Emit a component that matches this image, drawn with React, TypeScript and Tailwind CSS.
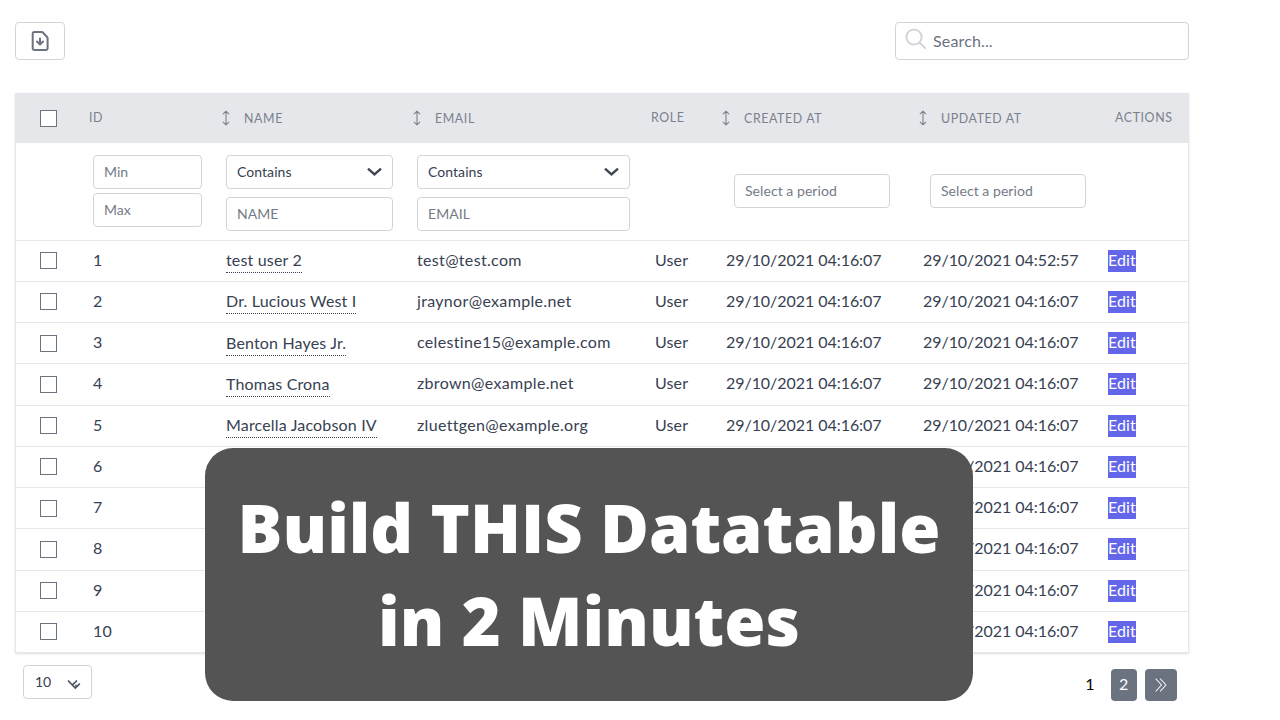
import { type ReactNode } from "react";
import clsx from "clsx";

interface UserRow {
  id: number;
  name: string;
  email: string;
  role: string;
  createdAt: string;
  updatedAt: string;
}

const STAMP = "29/10/2021 04:16:07";

const rows: UserRow[] = [
  { id: 1, name: "test user 2", email: "test@test.com", role: "User", createdAt: STAMP, updatedAt: "29/10/2021 04:52:57" },
  { id: 2, name: "Dr. Lucious West I", email: "jraynor@example.net", role: "User", createdAt: STAMP, updatedAt: STAMP },
  { id: 3, name: "Benton Hayes Jr.", email: "celestine15@example.com", role: "User", createdAt: STAMP, updatedAt: STAMP },
  { id: 4, name: "Thomas Crona", email: "zbrown@example.net", role: "User", createdAt: STAMP, updatedAt: STAMP },
  { id: 5, name: "Marcella Jacobson IV", email: "zluettgen@example.org", role: "User", createdAt: STAMP, updatedAt: STAMP },
  { id: 6, name: "", email: "", role: "", createdAt: "", updatedAt: STAMP },
  { id: 7, name: "", email: "", role: "", createdAt: "", updatedAt: STAMP },
  { id: 8, name: "", email: "", role: "", createdAt: "", updatedAt: STAMP },
  { id: 9, name: "", email: "", role: "", createdAt: "", updatedAt: STAMP },
  { id: 10, name: "", email: "", role: "", createdAt: "", updatedAt: STAMP },
];

const GRID = "grid grid-cols-[77px_133px_191px_238px_71px_197px_185px_81px]";

function Checkbox() {
  return <span className="ml-6 block size-[17px] border border-[#6b7280] bg-white" />;
}

function SortIcon() {
  return (
    <svg width="10" height="16" viewBox="0 0 10 16" fill="none" stroke="#7b818c" strokeWidth="1.1" strokeLinecap="round" strokeLinejoin="round">
      <path d="M5 1.5v13M2.2 3.8 5 1.2l2.8 2.6M2.2 12.2 5 14.8l2.8-2.6" />
    </svg>
  );
}

function ChevronIcon() {
  return (
    <svg width="15" height="10" viewBox="0 0 15 10" fill="none" stroke="#3f4754" strokeWidth="2.4">
      <path d="M1 1.6 7.5 7.4 14 1.6" />
    </svg>
  );
}

function HeaderCell({ label, sortable = false }: { label: string; sortable?: boolean }) {
  if (!sortable) {
    return <div className="text-[12.4px] tracking-[0.6px]">{label}</div>;
  }
  return (
    <div className="-ml-[5px] flex items-center gap-[13px] text-[12.4px] tracking-[0.6px]">
      <SortIcon />
      <span className="pt-0.5">{label}</span>
    </div>
  );
}

function Field({ children, className, filled = false }: { children: ReactNode; className?: string; filled?: boolean }) {
  return (
    <div
      className={clsx(
        "flex h-[34px] items-center justify-between rounded border border-[#d1d5db] bg-white px-2.5 pb-px text-[14px] tracking-[0.06px]",
        filled ? "text-[#374151]" : "text-[#747b87]",
        className
      )}
    >
      {children}
    </div>
  );
}

function TextFilter({ label }: { label: string }) {
  return (
    <div className="flex flex-col gap-2">
      <Field filled>
        Contains
        <ChevronIcon />
      </Field>
      <Field>{label}</Field>
    </div>
  );
}

function Toolbar() {
  return (
    <div className="flex h-[38px] justify-between">
      <button className="flex w-[50px] items-center justify-center rounded border border-[#d1d5db] bg-white">
        <svg width="24" height="24" viewBox="0 0 24 24" fill="none" stroke="#6b7280" strokeWidth="2" strokeLinecap="round" strokeLinejoin="round">
          <path d="M12 9.5v6m0 0-3-3m3 3 3-3M18 21H6.500a1.800 1.800 0 0 1-1.800-1.800V4.800A1.800 1.800 0 0 1 6.500 3h7.300c.3 0 .6.1.8.3l4.700 4.900c.2.2.3.5.3.8V19.200A1.800 1.800 0 0 1 17.800 21z" />
        </svg>
      </button>
      <div className="flex w-[294px] items-center gap-1.5 rounded border border-[#d1d5db] pl-[9px] text-[16px] text-[#6b7280]">
        <svg className="mb-1" width="22" height="22" viewBox="0 0 22 22" fill="none" stroke="#d1d5db" strokeWidth="2" strokeLinecap="round">
          <circle cx="9" cy="9" r="7.600" />
          <path d="m14.500 14.500 5.500 5.500" />
        </svg>
        <span className="pb-px tracking-[0.15px]">Search...</span>
      </div>
    </div>
  );
}

function Footer() {
  return (
    <div className="flex items-start justify-between pt-3 pr-3 pl-2">
      <div className="flex h-[34px] w-[69px] items-center justify-between rounded border border-[#d1d5db] pr-2.5 pl-[11px] text-[14px] text-[#374151]">
        <span className="pb-0.5">10</span>
        <svg className="mt-1" width="14" height="11" viewBox="0 0 14 11" fill="none" stroke="#4b5563" strokeWidth="1.700">
          <path d="m1 1.500 7.300 7.500 4.500-4.300M5.500 5.800 10 1.500M8.300 6.200l1.700 1.300" />
        </svg>
      </div>
      <div className="flex h-8 items-center pt-2 text-[16px]">
        <span className="mr-4 pb-0.5 text-black">1</span>
        <span className="mr-2 flex h-8 w-[26.500px] items-center justify-center rounded bg-[#6b7280] pb-0.5 text-white">2</span>
        <span className="flex h-8 w-8 items-center justify-center rounded bg-[#6b7280]">
          <svg width="14" height="16" viewBox="0 0 14 16" fill="none" stroke="white" strokeWidth="1.100" strokeLinecap="round" strokeLinejoin="round">
            <path d="m2 2 5.500 6L2 14M6.500 2l5.500 6-5.500 6" />
          </svg>
        </span>
      </div>
    </div>
  );
}

export default function App() {
  return (
    <div className="relative h-[720px] w-[1280px] overflow-hidden bg-white pt-[22px] pl-[15px] font-[Lato,sans-serif]">
      <div className="w-[1174px]">
        <Toolbar />

        <div className="mt-[32.500px] border border-[#e5e7eb] shadow-sm">
          <div className={clsx(GRID, "h-[49px] items-center bg-[#e5e7eb] text-[#7b818c]")}>
            <Checkbox />
            <div className="-ml-1"><HeaderCell label="ID" /></div>
            <HeaderCell label="NAME" sortable />
            <HeaderCell label="EMAIL" sortable />
            <div className="-ml-1"><HeaderCell label="ROLE" /></div>
            <HeaderCell label="CREATED AT" sortable />
            <HeaderCell label="UPDATED AT" sortable />
            <div className="ml-[7px]"><HeaderCell label="ACTIONS" /></div>
          </div>

          <div className={clsx(GRID, "h-[97px] items-center")}>
            <span />
            <div className="flex w-[109px] flex-col gap-1">
              <Field>Min</Field>
              <Field>Max</Field>
            </div>
            <div className="mt-1 w-[167px]"><TextFilter label="NAME" /></div>
            <div className="mt-1 w-[213px]"><TextFilter label="EMAIL" /></div>
            <span />
            <Field className="ml-2 w-[156px]">Select a period</Field>
            <Field className="ml-[7px] w-[156px]">Select a period</Field>
          </div>

          {rows.map((row) => (
            <div
              key={row.id}
              className={clsx(GRID, "h-[41.25px] items-center border-t border-[#e5e7eb] text-[16px] tracking-[0.13px] text-[#374151]")}
            >
              <Checkbox />
              <span className="pb-0.5">{row.id}</span>
              <span>
                {row.name && (
                  <span className="inline-block border-b border-dotted border-[#374151] tracking-[0.17px]">{row.name}</span>
                )}
              </span>
              <span className="pb-0.5 tracking-[0.33px]">{row.email}</span>
              <span className="pb-0.5">{row.role}</span>
              <span className="pb-0.5 tracking-[-0.05px]">{row.createdAt}</span>
              <span className="pb-0.5 tracking-[-0.05px]">{row.updatedAt}</span>
              <span className="flex h-[22px] w-7 items-center bg-[#6366e8] pb-0.5 text-white">Edit</span>
            </div>
          ))}
        </div>

        <Footer />
      </div>

      <div className="absolute top-[448px] left-[205px] flex h-[253px] w-[768px] items-center justify-center rounded-[28px] bg-[#545454] pb-0.5 text-center font-['Open_Sans',sans-serif] text-[66.67px] leading-[93px] font-extrabold text-white">
        <h1>
          Build THIS Datatable
          <br />
          in 2 Minutes
        </h1>
      </div>
    </div>
  );
}
